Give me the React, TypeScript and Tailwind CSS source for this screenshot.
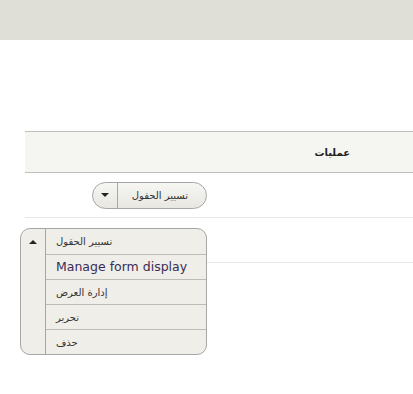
import React from "react";

const items = ["تسيير الحقول", "Manage form display", "إدارة العرض", "تحرير", "حذف"];

function App() {
    return (
        <div className="relative w-[413px] h-[394px] bg-white overflow-hidden" style={{ fontFamily: '"DejaVu Sans", Verdana, sans-serif' }}>
            {/* top bar */}
            <div className="h-[40px] bg-[#dfdfd7]" />

            {/* table */}
            <div className="mt-[91px] ml-[25px]">
                <div dir="rtl" className="h-[42px] flex items-center bg-[#f5f5f2] border-y border-[#bfbfba] pr-[63px] text-[10px] font-bold text-[#222]">
                    عمليات
                </div>
                <div className="h-[45px] flex items-center border-b border-[#e6e6e6] pl-[67px]">
                    <div className="flex h-[27px] w-[115px] rounded-full border border-[#a6a6a6] bg-gradient-to-b from-[#f6f6f3] to-[#e8e7e1] overflow-hidden">
                        <div className="w-[25px] flex items-center justify-center border-r border-[#a6a6a6]">
                            <span className="block w-0 h-0 border-x-[4px] border-x-transparent border-t-[4px] border-t-[#222]" />
                        </div>
                        <div dir="rtl" className="flex-1 flex items-center pr-[18px] text-[10px] text-[#333]">
                            تسيير الحقول
                        </div>
                    </div>
                </div>
                <div className="h-[45px] border-b border-[#e6e6e6]" />
            </div>

            {/* open dropdown */}
            <div className="absolute left-[20px] top-[228px] w-[187px] flex rounded-[10px] border border-[#a6a6a6] bg-[#efeee9] overflow-hidden">
                <div className="w-[25px] border-r border-[#a6a6a6] flex justify-center pt-[11px]">
                    <span className="block w-0 h-0 border-x-[4px] border-x-transparent border-b-[4px] border-b-[#222]" />
                </div>
                <div className="flex-1 flex flex-col">
                    {items.map((t, i) => (
                        <div
                            key={t}
                            className={`h-[25px] flex items-center pl-[10px] ${i > 0 ? "border-t border-[#bdbdb6]" : ""} ${i === 1 ? "text-[12.5px] text-[#3a2d55]" : "text-[10px] text-[#333]"}`}
                        >
                            <span dir="auto">{t}</span>
                        </div>
                    ))}
                </div>
            </div>
        </div>
    );
}

export default App;
